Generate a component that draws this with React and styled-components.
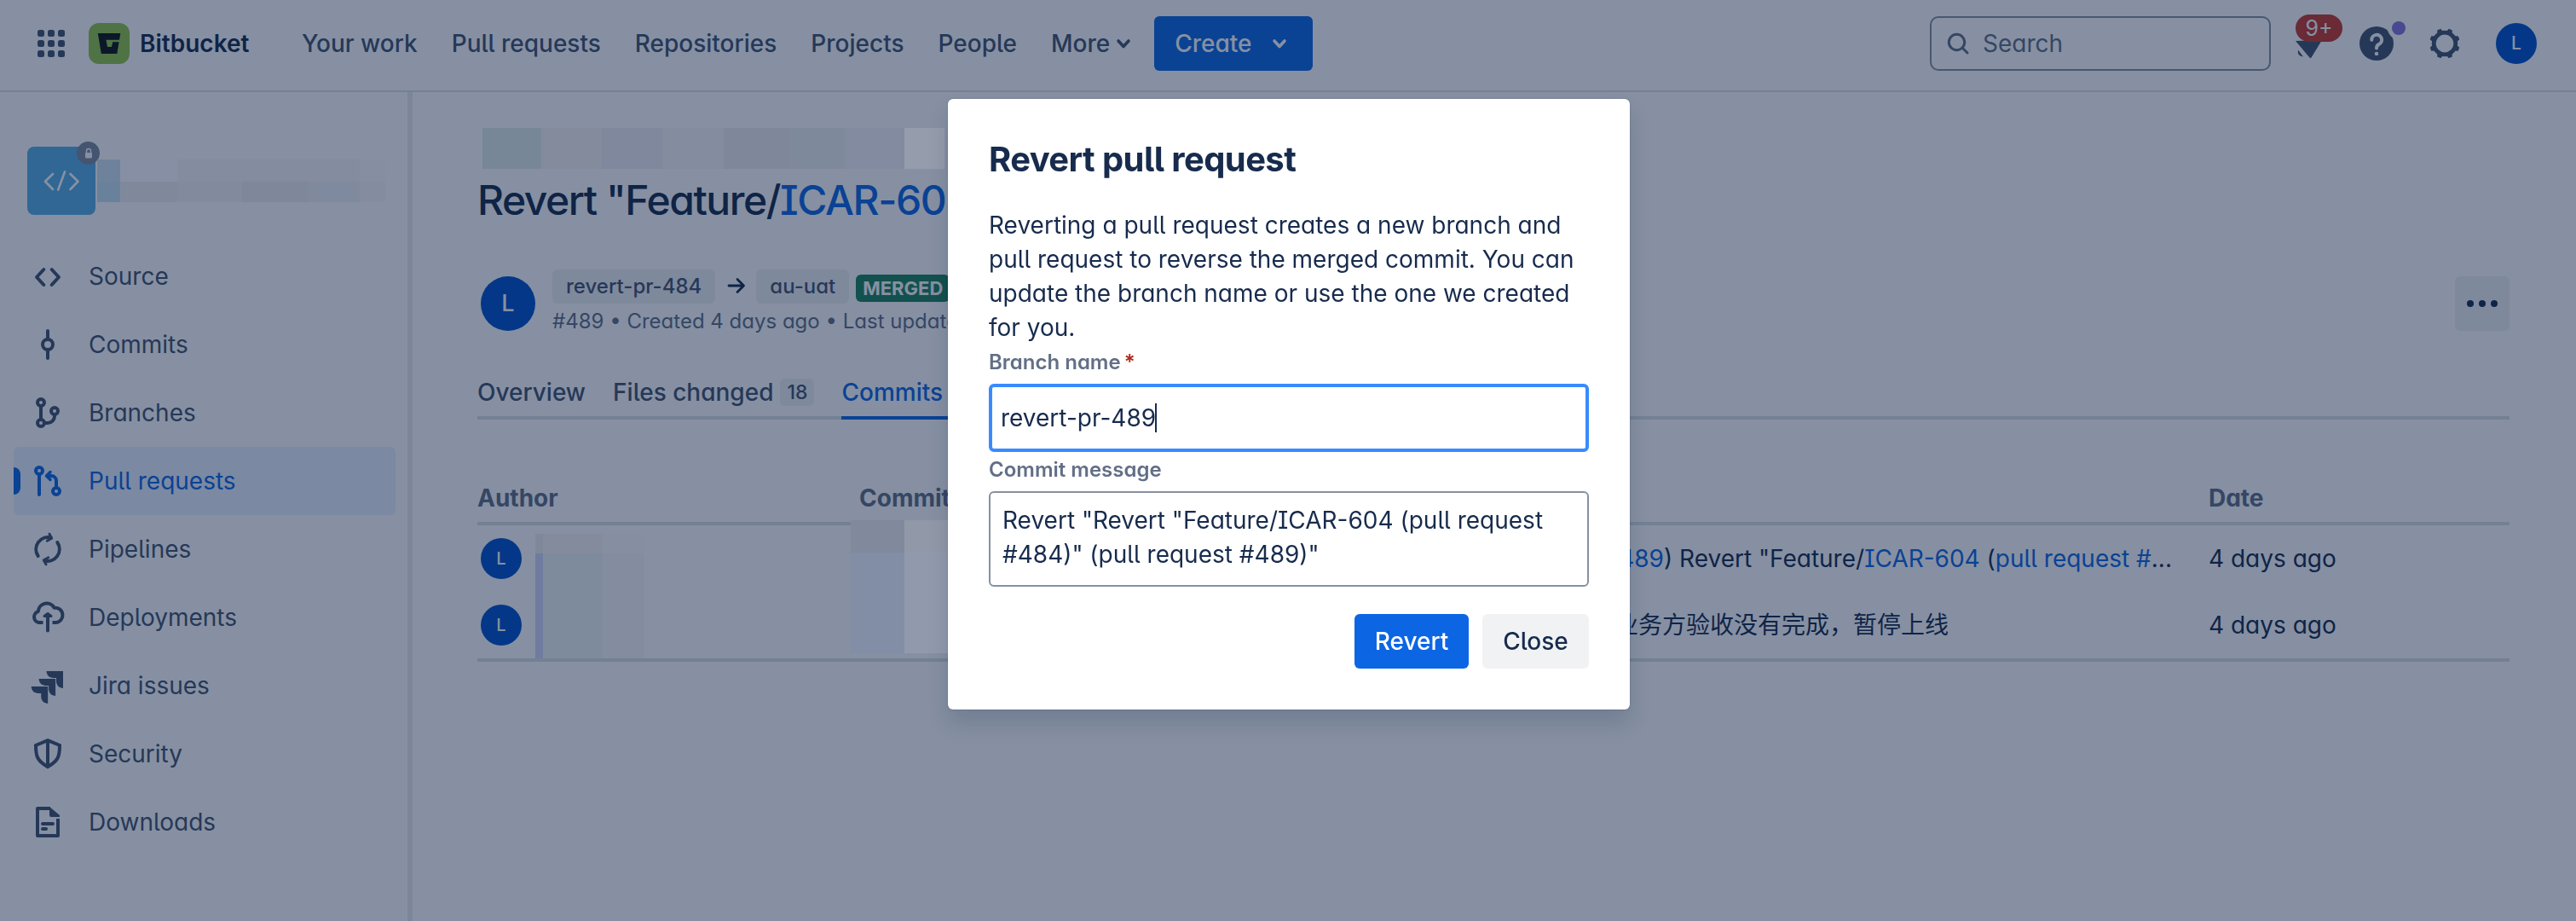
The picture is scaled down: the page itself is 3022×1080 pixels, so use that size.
import React from "react";
import styled, { createGlobalStyle } from "styled-components";

const GlobalStyle = createGlobalStyle`
  * {
    box-sizing: border-box;
  }
  body {
    margin: 0;
    background: #ffffff;
    color: #172b4d;
    font-family: Inter, "Noto Sans CJK SC", sans-serif;
    font-feature-settings: "cv05", "cv08", "cv11";
    font-size: 28px;
    line-height: 40px;
  }
`;

const Page = styled.div`
  display: flex;
  flex-direction: column;
  height: 1080px;
  overflow: hidden;
`;

/* top navigation */

const TopBar = styled.header`
  display: flex;
  align-items: center;
  flex: none;
  height: 108px;
  padding: 0 46px 4px 44px;
  border-bottom: 2px solid #dcdfe4;
  color: #44546f;
`;

const AppSwitcher = styled.div`
  display: grid;
  grid-template-columns: repeat(3, 8px);
  grid-auto-rows: 8px;
  gap: 4px;

  span {
    border-radius: 2.5px;
    background: #44546f;
  }
`;

const Brand = styled.div`
  display: flex;
  align-items: center;
  gap: 12px;
  width: 250px;
  margin-left: 28px;
  color: #172b4d;
  font-weight: 600;
`;

const NavLinks = styled.nav`
  display: flex;
  align-items: center;
  gap: 40px;
  font-weight: 500;
`;

const NavLink = styled.span`
  display: flex;
  align-items: center;
  gap: 8px;
  white-space: nowrap;
`;

const CreateButton = styled.button`
  display: flex;
  align-items: center;
  justify-content: space-between;
  width: 186px;
  height: 64px;
  margin-left: 28px;
  padding: 0 31px 0 24px;
  border: 0;
  border-radius: 6px;
  background: #0c66e4;
  color: #ffffff;
  font: inherit;
  font-weight: 500;
`;

const SearchBox = styled.div`
  display: flex;
  align-items: center;
  gap: 16px;
  width: 400px;
  height: 64px;
  margin-left: auto;
  padding-left: 18px;
  border: 2px solid #8590a2;
  border-radius: 10px;
  color: #626f86;
`;

const TopActions = styled.div`
  display: flex;
  align-items: center;
  gap: 32px;
  margin: 0 36px 0 20px;
`;

const ActionIcon = styled.div`
  position: relative;
  display: flex;
  width: 48px;
  height: 48px;
`;

const CountBadge = styled.span`
  position: absolute;
  top: -10px;
  left: 9px;
  width: 55px;
  height: 32px;
  border-radius: 16px;
  background: #c9372c;
  color: #ffffff;
  font-size: 25px;
  line-height: 32px;
  text-align: center;
`;

const Avatar = styled.div`
  flex: none;
  width: ${(p) => p.$size}px;
  height: ${(p) => p.$size}px;
  border-radius: 50%;
  background: #0052cc;
  color: #ffffff;
  font-size: ${(p) => p.$font}px;
  font-weight: 500;
  line-height: ${(p) => p.$size}px;
  text-align: center;
`;

/* sidebar */

const Body = styled.div`
  display: flex;
  flex: 1;
  min-height: 0;
`;

const Sidebar = styled.aside`
  flex: none;
  width: 484px;
  padding: 64px 14px 0 16px;
  border-right: 6px solid #ebecf0;
`;

const RepoHeader = styled.div`
  display: flex;
  align-items: center;
  gap: 2px;
  height: 80px;
  margin: 0 0 32px 16px;
`;

const RepoIcon = styled.div`
  position: relative;
  width: 80px;
  height: 80px;
  border-radius: 8px;
  background: #57afe5;
`;

const LockBadge = styled.div`
  position: absolute;
  top: -6px;
  right: -5px;
  display: flex;
  align-items: center;
  justify-content: center;
  width: 27px;
  height: 27px;
  border-radius: 50%;
  background: #7e89a0;
`;

const SideItem = styled.div`
  position: relative;
  display: flex;
  align-items: center;
  gap: 24px;
  width: 448px;
  height: 80px;
  padding-left: 16px;
  border-radius: 6px;
  background: ${(p) => (p.$active ? "#e9f2ff" : "transparent")};
  color: ${(p) => (p.$active ? "#0c66e4" : "#44546f")};

  &::before {
    content: "";
    display: ${(p) => (p.$active ? "block" : "none")};
    position: absolute;
    left: 0;
    width: 8px;
    height: 32px;
    border-radius: 0 8px 8px 0;
    background: #0c66e4;
  }
`;

/* pull request */

const Main = styled.main`
  flex: 1;
  min-width: 0;
  padding: 42px 78px 0 76px;
`;

const Breadcrumbs = styled.div`
  display: flex;
  height: 48px;
  padding-left: 6px;
`;

const Title = styled.h1`
  margin: 9px 0 53px;
  font-size: 48px;
  font-weight: 500;
  line-height: 56px;
  letter-spacing: -0.03em;
  white-space: nowrap;
`;

const Link = styled.span`
  color: #0c66e4;
`;

const MetaRow = styled.div`
  display: flex;
  align-items: center;
  height: 80px;
  padding-left: 4px;
`;

const MetaText = styled.div`
  display: flex;
  flex-direction: column;
  gap: 5px;
  height: 80px;
  margin-left: 20px;
`;

const Branches = styled.div`
  display: flex;
  align-items: center;
  height: 40px;
`;

const BranchPill = styled.span`
  padding: 0 16px;
  border-radius: 6px;
  background: #f1f2f4;
  color: #44546f;
  font-size: 24px;
  font-weight: 500;
`;

const MergedLozenge = styled.span`
  height: 32px;
  margin: 4px 0 0 8px;
  padding: 0 8px;
  border-radius: 6px;
  background: #1f845a;
  color: #ffffff;
  font-size: 22px;
  font-weight: 700;
  line-height: 32px;
`;

const Byline = styled.div`
  color: #626f86;
  font-size: 24px;
  line-height: 32px;
  white-space: nowrap;
`;

const MoreButton = styled.div`
  display: flex;
  align-items: center;
  justify-content: center;
  gap: 6px;
  width: 64px;
  height: 64px;
  margin-left: auto;
  border-radius: 6px;
  background: #f1f2f4;

  span {
    width: 8px;
    height: 8px;
    border-radius: 50%;
    background: #172b4d;
  }
`;

const Tabs = styled.div`
  display: flex;
  gap: 32px;
  height: 60px;
  margin: 36px 0 64px;
  border-bottom: 4px solid #dcdfe4;
  color: #44546f;
  font-weight: 500;
`;

const Tab = styled.div`
  display: flex;
  align-items: center;
  gap: 8px;
  height: 60px;
  padding-right: ${(p) => (p.$active ? 24 : 0)}px;
  border-bottom: 4px solid ${(p) => (p.$active ? "#0c66e4" : "transparent")};
  color: ${(p) => (p.$active ? "#0c66e4" : "inherit")};
`;

const Counter = styled.span`
  width: 40px;
  height: 32px;
  border-radius: 6px;
  background: #f1f2f4;
  color: #44546f;
  font-size: 23px;
  line-height: 32px;
  text-align: center;
`;

const Table = styled.div`
  position: relative;
  border-bottom: 4px solid #dcdfe4;
`;

const TableRow = styled.div`
  display: grid;
  grid-template-columns: 448px 340px 1fr 353px;
  align-items: center;
  height: ${(p) => (p.$head ? 60 : 78)}px;
  border-bottom: ${(p) => (p.$head ? "4px solid #dcdfe4" : "0")};
  color: ${(p) => (p.$head ? "#626f86" : "inherit")};
  font-weight: ${(p) => (p.$head ? 700 : 400)};
`;

const Cell = styled.div`
  padding-left: ${(p) => p.$indent || 0}px;
  white-space: nowrap;
`;

const MessageCell = styled(Cell)`
  padding-right: ${(p) => p.$gap}px;
  text-align: right;
`;

/* blocks that hide private names, kept above the blanket */

const Mosaic = styled.div`
  z-index: 20;
  display: grid;
  grid-template-columns: ${(p) => p.$cols};
  grid-template-rows: ${(p) => p.$rows || "100%"};
  height: ${(p) => p.$height}px;
`;

const FloatingMosaic = styled(Mosaic)`
  position: absolute;
  top: ${(p) => p.$top}px;
  left: ${(p) => p.$left}px;
`;

const Tile = styled.span`
  background: ${(p) => p.$color};
`;

/* dialog */

const Blanket = styled.div`
  position: fixed;
  inset: 0;
  z-index: 10;
  background: rgba(9, 28, 66, 0.49);
`;

const DialogLayer = styled.div`
  position: fixed;
  inset: 0;
  z-index: 30;
  display: flex;
  align-items: flex-start;
  padding: 116px 0 0 1112px;
`;

const Dialog = styled.section`
  width: 800px;
  height: 716px;
  padding: 48px;
  border-radius: 6px;
  background: #ffffff;
  box-shadow: 0 16px 24px rgba(9, 30, 66, 0.15), 0 0 2px rgba(9, 30, 66, 0.31);
`;

const DialogTitle = styled.h2`
  margin: 0 0 34px;
  font-size: 40px;
  font-weight: 700;
  line-height: 46px;
  letter-spacing: -0.6px;
`;

const DialogText = styled.p`
  margin: 0;
  white-space: nowrap;
`;

const FieldLabel = styled.div`
  margin: 5px 0 9px;
  color: #626f86;
  font-size: 24px;
  font-weight: 600;
  line-height: 32px;

  span {
    margin-left: 4px;
    color: #ae2a19;
  }
`;

const TextField = styled.div`
  display: flex;
  align-items: center;
  height: 80px;
  padding-left: 10px;
  border: 4px solid #388bff;
  border-radius: 6px;
`;

const Caret = styled.span`
  width: 2px;
  height: 34px;
  margin-left: -1px;
  background: #172b4d;
`;

const TextArea = styled.div`
  height: 112px;
  padding: 12px 14px;
  border: 2px solid #8590a2;
  border-radius: 6px;
  white-space: nowrap;
`;

const DialogFooter = styled.div`
  display: flex;
  justify-content: flex-end;
  gap: 16px;
  margin-top: 32px;
`;

const Button = styled.button`
  width: ${(p) => (p.$primary ? 134 : 125)}px;
  height: 64px;
  padding: 0;
  border: 0;
  border-radius: 6px;
  background: ${(p) => (p.$primary ? "#0c66e4" : "#f1f2f4")};
  color: ${(p) => (p.$primary ? "#ffffff" : "#172b4d")};
  font: inherit;
  font-weight: 500;
`;

/* icons */

const Glyph = ({ size = 48, children }) => (
  <svg
    width={size}
    height={size}
    viewBox={`0 0 ${size} ${size}`}
    fill="none"
    stroke="currentColor"
    strokeWidth="4"
    strokeLinecap="round"
    strokeLinejoin="round"
    overflow="visible"
  >
    {children}
  </svg>
);

const Chevron = () => (
  <Glyph size={16}>
    <path d="M2 5l6 6.5L14 5" strokeWidth="3.6" />
  </Glyph>
);

const BitbucketLogo = () => (
  <Glyph>
    <rect width="48" height="48" rx="12" fill="#94c748" stroke="none" />
    <path
      d="M10.8 12h26.5L36 19.7H20.4L22 28h5l1.2-5.8h7.4L33.3 36H14.8z"
      fill="#101214"
      stroke="none"
    />
  </Glyph>
);

const BellIcon = () => (
  <Glyph>
    <path d="M9 21L40 20L27.5 40.5Q26.5 42 25 40z" fill="currentColor" stroke="none" />
    <path d="M12 31.5q-1.5 7 6 8z" fill="currentColor" stroke="none" />
  </Glyph>
);

const HelpIcon = () => (
  <Glyph>
    <circle cx="24" cy="24" r="20" fill="currentColor" stroke="none" />
    <path d="M18.3 19.8a5.9 5.9 0 1 1 8.3 5.3Q24 26.4 24 29.5" stroke="#ffffff" />
    <circle cx="24" cy="36" r="2.3" fill="#ffffff" stroke="none" />
    <circle cx="50" cy="6" r="13" fill="#ffffff" stroke="none" />
    <circle cx="50" cy="6" r="8" fill="#8674dc" stroke="none" />
  </Glyph>
);

const GearIcon = () => (
  <Glyph>
    <circle cx="24" cy="24" r="12.8" strokeWidth="4.8" />
    {[22.5, 67.5, 112.5, 157.5, 202.5, 247.5, 292.5, 337.5].map((angle) => (
      <path
        key={angle}
        d="M21.5 9.8l.8-2.8h3.4l.8 2.8z"
        transform={`rotate(${angle} 24 24)`}
        fill="currentColor"
        strokeWidth="1.6"
      />
    ))}
  </Glyph>
);

const SearchIcon = () => (
  <Glyph size={26}>
    <circle cx="11.5" cy="11.5" r="9.2" strokeWidth="3" />
    <path d="M18.5 18.5l5.5 5.5" strokeWidth="3" />
  </Glyph>
);

const CodeIcon = () => (
  <Glyph size={80}>
    <path
      d="M30 32l-9 8.7 9 9.3M50.5 32l9 8.7-9 9.3M44 29.5l-7.8 21"
      stroke="#ffffff"
      strokeWidth="2.7"
    />
  </Glyph>
);

const LockIcon = () => (
  <svg width="10" height="14" viewBox="0 0 10 14" fill="none">
    <rect x="1" y="6" width="8" height="6.5" rx="1" fill="#ffffff" />
    <path d="M2.5 6.5V4a2.5 2.5 0 0 1 5 0v2.5" stroke="#ffffff" strokeWidth="1.5" />
  </svg>
);

const ArrowIcon = () => (
  <svg
    width="48"
    height="24"
    viewBox="0 0 48 24"
    fill="none"
    stroke="#172b4d"
    strokeWidth="2.8"
    strokeLinecap="round"
    strokeLinejoin="round"
  >
    <path d="M16 11h17M26 3.5l7.5 7.5-7.5 7.5" />
  </svg>
);

const sideItems = [
  {
    label: "Source",
    icon: <path d="M19.3 16L11 25l8.3 9M28.7 16L37 25l-8.3 9" />,
  },
  {
    label: "Commits",
    icon: (
      <>
        <circle cx="24" cy="24" r="6" />
        <path d="M24 8v8M24 32v8" />
      </>
    ),
  },
  {
    label: "Branches",
    icon: (
      <>
        <circle cx="16" cy="12" r="4" />
        <circle cx="16" cy="36" r="4" />
        <circle cx="32" cy="22" r="4" />
        <path d="M16 16v16M32 26v2a8 8 0 0 1-8 8h-3" />
      </>
    ),
  },
  {
    label: "Pull requests",
    active: true,
    icon: (
      <>
        <circle cx="14" cy="12" r="4" />
        <circle cx="34" cy="36" r="4" />
        <path d="M14 16v24M34 32v-8a6 6 0 0 0-6-6h-4" />
        <path d="M27 13.5L22.5 18l4.5 4.5" strokeWidth="3.5" />
      </>
    ),
  },
  {
    label: "Pipelines",
    icon: (
      <>
        <path d="M12.7 32A14 14 0 0 1 28 10.6M35.3 16A14 14 0 0 1 20 37.4" />
        <path d="M26 6.2l2.6 5-5.3 3M22 41.8l-2.6-5 5.3-3" strokeWidth="3" />
      </>
    ),
  },
  {
    label: "Deployments",
    icon: (
      <>
        <path
          d="M18.5 30h-5A6.7 6.7 0 0 1 12.8 17A10 10 0 0 1 31.6 12.8A8.6 8.6 0 0 1 34 30h-4.5"
          strokeLinecap="butt"
        />
        <path d="M24 22v17.5" />
        <path d="M20 22.5l4-3 4 3z" fill="currentColor" strokeWidth="3" />
      </>
    ),
  },
  {
    label: "Jira issues",
    icon: (
      <g fill="currentColor" stroke="none">
        <path d="M22.5 7H42v20c-4.5 0-8-3.6-8-8v-4h-3.5c-4.5 0-8-3.6-8-8z" />
        <path d="M13.6 16h19.5v20c-4.5 0-8-3.6-8-8v-4h-3.5c-4.5 0-8-3.6-8-8z" />
        <path d="M4.7 25h19.5v20c-4.5 0-8-3.6-8-8v-4h-3.5c-4.5 0-8-3.6-8-8z" />
      </g>
    ),
  },
  {
    label: "Security",
    icon: (
      <path
        d="M24 8.2L38 14C38 27 36.5 32 24 39.2C11.5 32 10 27 10 14zV39"
        strokeLinejoin="miter"
      />
    ),
  },
  {
    label: "Downloads",
    icon: (
      <>
        <path d="M36 20v20H12V8h15" strokeLinecap="butt" />
        <path d="M26 6l12 10v2H28q-2 0-2-2z" fill="currentColor" stroke="none" />
        <path d="M18 26h12M18 32h4" />
      </>
    ),
  },
];

const TopNavigation = () => (
  <TopBar>
    <AppSwitcher>
      {Array.from({ length: 9 }, (_, i) => (
        <span key={i} />
      ))}
    </AppSwitcher>
    <Brand>
      <BitbucketLogo />
      Bitbucket
    </Brand>
    <NavLinks>
      <NavLink>Your work</NavLink>
      <NavLink>Pull requests</NavLink>
      <NavLink>Repositories</NavLink>
      <NavLink>Projects</NavLink>
      <NavLink>People</NavLink>
      <NavLink>
        More
        <Chevron />
      </NavLink>
    </NavLinks>
    <CreateButton>
      Create
      <Chevron />
    </CreateButton>
    <SearchBox>
      <SearchIcon />
      Search
    </SearchBox>
    <TopActions>
      <ActionIcon>
        <BellIcon />
        <CountBadge>9+</CountBadge>
      </ActionIcon>
      <ActionIcon>
        <HelpIcon />
      </ActionIcon>
      <ActionIcon>
        <GearIcon />
      </ActionIcon>
    </TopActions>
    <Avatar $size={48} $font={21}>L</Avatar>
  </TopBar>
);

const repoTiles = [
  "#6f829b", "#868fa4", "#848da0", "#848da0", "#848da0", "#868fa2",
  "#6a819b", "#80899b", "#828b9e", "#7f889a", "#808a9e", "#848da0",
];

const SideNavigation = () => (
  <Sidebar>
    <RepoHeader>
      <RepoIcon>
        <CodeIcon />
        <LockBadge>
          <LockIcon />
        </LockBadge>
      </RepoIcon>
      <Mosaic $cols="27px 67px 76px 78px 60px 30px" $rows="26px 24px" $height={50}>
        {repoTiles.map((color, i) => (
          <Tile key={i} $color={color} />
        ))}
      </Mosaic>
    </RepoHeader>
    {sideItems.map(({ label, icon, active }) => (
      <SideItem key={label} $active={active}>
        <Glyph>{icon}</Glyph>
        {label}
      </SideItem>
    ))}
  </Sidebar>
);

const CommitsTable = () => (
  <Table>
    <TableRow $head>
      <Cell>Author</Cell>
      <Cell>Commit</Cell>
      <Cell />
      <Cell>Date</Cell>
    </TableRow>
    <TableRow>
      <Cell $indent={4}>
        <Avatar $size={48} $font={20}>L</Avatar>
      </Cell>
      <Cell />
      <MessageCell $gap={43}>
        <Link>489</Link>) Revert "Feature/<Link>ICAR-604</Link> (<Link>pull request #</Link>...
      </MessageCell>
      <Cell>4 days ago</Cell>
    </TableRow>
    <TableRow>
      <Cell $indent={4}>
        <Avatar $size={48} $font={20}>L</Avatar>
      </Cell>
      <Cell />
      <MessageCell $gap={305}>业务方验收没有完成，暂停上线</MessageCell>
      <Cell>4 days ago</Cell>
    </TableRow>
    <FloatingMosaic $top={70} $left={68} $height={146} $cols="9px 70px 49px" $rows="23px 123px">
      <Tile $color="#7d8999" />
      <Tile $color="#838b9d" />
      <Tile $color="#868fa1" />
      <Tile $color="#6f7b9f" />
      <Tile $color="#7e8b9d" />
      <Tile $color="#848d9f" />
    </FloatingMosaic>
    <FloatingMosaic $top={54} $left={438} $height={156} $cols="63px 80px" $rows="38px 118px">
      <Tile $color="#818a9c" />
      <Tile $color="#9199a8" />
      <Tile $color="#828da6" />
      <Tile $color="#919aad" />
    </FloatingMosaic>
  </Table>
);

const crumbTiles = [
  "#788798", "#838b9d", "#80889e", "#848d9f", "#7f889a", "#7e899b", "#838ba1", "#959cac",
];

const PullRequest = () => (
  <Main>
    <Breadcrumbs>
      <Mosaic $height={48} $cols="69px 71px 71px 72px 78px 64px 70px 47px">
        {crumbTiles.map((color) => (
          <Tile key={color} $color={color} />
        ))}
      </Mosaic>
    </Breadcrumbs>
    <Title>
      Revert "Feature/<Link>ICAR-604</Link>
    </Title>
    <MetaRow>
      <Avatar $size={64} $font={27}>L</Avatar>
      <MetaText>
        <Branches>
          <BranchPill>revert-pr-484</BranchPill>
          <ArrowIcon />
          <BranchPill>au-uat</BranchPill>
          <MergedLozenge>MERGED</MergedLozenge>
        </Branches>
        <Byline>#489 • Created 4 days ago • Last updated</Byline>
      </MetaText>
      <MoreButton>
        <span />
        <span />
        <span />
      </MoreButton>
    </MetaRow>
    <Tabs>
      <Tab>Overview</Tab>
      <Tab>
        Files changed
        <Counter>18</Counter>
      </Tab>
      <Tab $active>Commits</Tab>
    </Tabs>
    <CommitsTable />
  </Main>
);

const RevertDialog = () => (
  <DialogLayer>
    <Dialog>
      <DialogTitle>Revert pull request</DialogTitle>
      <DialogText>
        Reverting a pull request creates a new branch and
        <br />
        pull request to reverse the merged commit. You can
        <br />
        update the branch name or use the one we created
        <br />
        for you.
      </DialogText>
      <FieldLabel>
        Branch name<span>*</span>
      </FieldLabel>
      <TextField>
        revert-pr-489
        <Caret />
      </TextField>
      <FieldLabel>Commit message</FieldLabel>
      <TextArea>
        Revert "Revert "Feature/ICAR-604 (pull request
        <br />
        #484)" (pull request #489)"
      </TextArea>
      <DialogFooter>
        <Button $primary>Revert</Button>
        <Button>Close</Button>
      </DialogFooter>
    </Dialog>
  </DialogLayer>
);

const App = () => (
  <>
    <GlobalStyle />
    <Page>
      <TopNavigation />
      <Body>
        <SideNavigation />
        <PullRequest />
      </Body>
    </Page>
    <Blanket />
    <RevertDialog />
  </>
);

export default App;
